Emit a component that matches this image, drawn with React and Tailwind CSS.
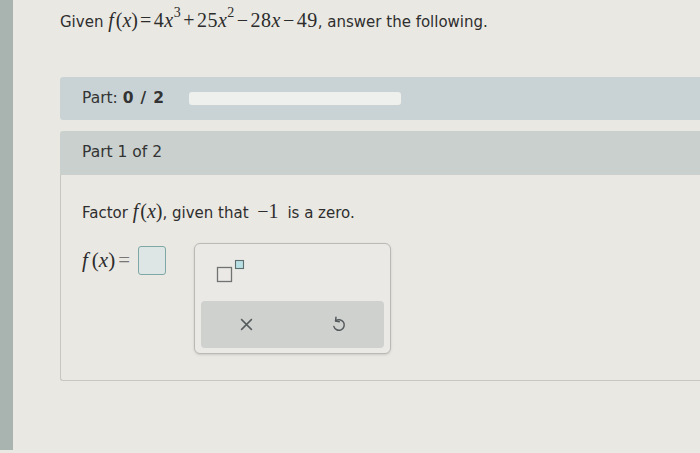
import React from 'react';

const sans = { fontFamily: '"DejaVu Sans", Verdana, sans-serif' };
const serif = { fontFamily: '"Liberation Serif", "Times New Roman", serif' };

function Fx() {
  return (
    <span className="text-[20px] text-[#2c2c2c]" style={serif}>
      <i>f</i>
      <span className="ml-[2px]">(</span>
      <i>x</i>
      <span>)</span>
    </span>
  );
}

function Op({ children }) {
  return <span className="mx-[2px]">{children}</span>;
}

function Keypad() {
  return (
    <div className="ml-[28px] w-[197px] h-[111px] rounded-md border border-[#b9bab6] bg-[#ebe9e5] shadow-sm px-[6px] pb-[5px] flex flex-col">
      <div className="h-[57px] pl-[14px] pt-[14px]">
        {/* superscript template */}
        <svg width="30" height="26" viewBox="0 0 30 26">
          <rect x="2.5" y="9.5" width="14" height="14" fill="none" stroke="#6f7371" strokeWidth="1.3" />
          <rect x="20.5" y="2.5" width="8" height="8" fill="#b8dfe3" stroke="#5c6e70" strokeWidth="1.1" />
        </svg>
      </div>
      <div className="flex-1 rounded bg-[#cfd1cf] flex items-center">
        <div className="flex-1 flex justify-center pr-[2px]">
          <svg width="15" height="15" viewBox="0 0 14 14">
            <path d="M2 2 L12 12 M12 2 L2 12" stroke="#555a5c" strokeWidth="1.4" fill="none" />
          </svg>
        </div>
        <div className="flex-1 flex justify-center">
          <svg width="15" height="17" viewBox="0 0 14 16">
            <path d="M4.2 4.6 A5 5 0 1 1 2.6 9.8" stroke="#555a5c" strokeWidth="1.4" fill="none" strokeLinecap="round" />
            <path d="M4.6 1.2 L4.3 4.8 L7.8 5.4" stroke="#555a5c" strokeWidth="1.4" fill="none" strokeLinecap="round" strokeLinejoin="round" />
          </svg>
        </div>
      </div>
    </div>
  );
}

export default function App() {
  return (
    <div className="w-[700px] h-[453px] bg-[#eae8e3] flex overflow-hidden" style={sans}>
      <div className="w-[13px] h-[450px] bg-[#a9b3b0] shrink-0" />
      <div className="flex-1 flex flex-col">
        <div className="h-[77px] pl-[47px] pt-[4px]">
          <p className="text-[15px] text-[#2e2e2e] leading-[32px]">
            Given <Fx />
            <span className="text-[20px] text-[#2c2c2c] tracking-[0.5px]" style={serif}>
              <Op>=</Op>4<i>x</i>
              <sup className="text-[14px] top-[-10px]">3</sup>
              <Op>+</Op>25<i>x</i>
              <sup className="text-[14px] top-[-10px]">2</sup>
              <Op>−</Op>28<i>x</i>
              <Op>−</Op>49
            </span>
            , answer the following.
          </p>
        </div>
        <div className="ml-[47px]">
          <div className="h-[43px] bg-[#c9d3d6] rounded-l-[3px] flex items-center pl-[22px]">
            <span className="text-[15.5px] text-[#333]">
              Part: <b className="tracking-[0.8px]">0 / 2</b>
            </span>
            <div className="ml-[24px] w-[212px] h-[13px] rounded-[3px] bg-[#eef0ee]" />
          </div>
          <div className="mt-[11px] h-[44px] bg-[#c9d0ce] rounded-tl-[3px] flex items-center pl-[22px]">
            <span className="text-[15.5px] text-[#333]">Part 1 of 2</span>
          </div>
          <div className="h-[206px] border-l border-b border-[#c6c6c2] rounded-bl-[3px] pl-[21px] pt-[24px]">
            <p className="text-[15px] text-[#2e2e2e] leading-[24px]">
              Factor <Fx />, given that <span className="text-[20px] mx-[4px]" style={serif}>−1</span> is a zero.
            </p>
            <div className="flex items-start mt-[18px]">
              <div className="flex items-center h-[29px] mt-[3px]">
                <span className="text-[21px] text-[#2c2c2c]" style={serif}>
                  <i>f</i>
                  <span className="ml-[4px]">(</span>
                  <i>x</i>)<span className="ml-[3px] text-[#777]">=</span>
                </span>
                <div className="ml-[8px] w-[28px] h-[29px] rounded-[3px] border-[1.5px] border-[#7fa7a6] bg-[#dde6e4]" />
              </div>
              <Keypad />
            </div>
          </div>
        </div>
      </div>
    </div>
  );
}
